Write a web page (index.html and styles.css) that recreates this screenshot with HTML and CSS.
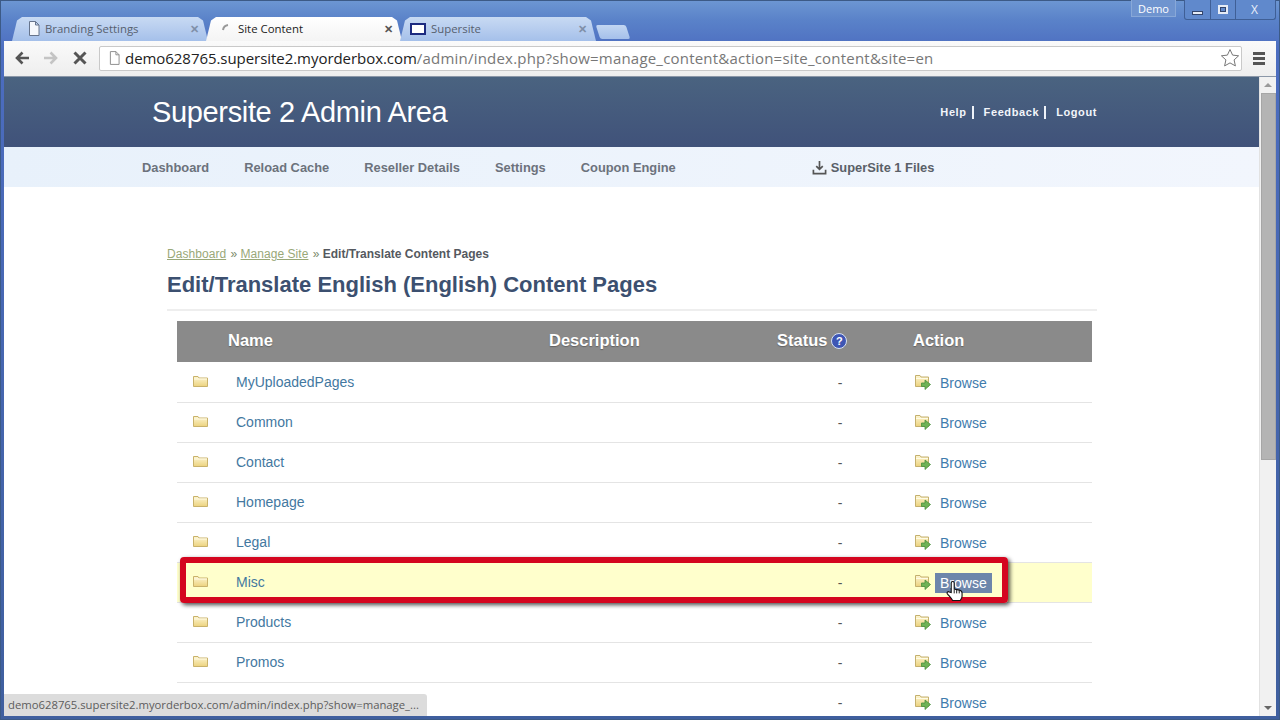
FILE: index.html
```html
<!DOCTYPE html>
<html lang="en">
<head>
    <meta charset="UTF-8">
    <title>Site Content</title>
    <link rel="stylesheet" href="styles.css">
</head>
<body>
    <svg class="defs" width="0" height="0">
        <defs>
            <linearGradient id="folderFill" x1="0" y1="0" x2="0" y2="1">
                <stop offset="0" stop-color="#fdf6d2"/>
                <stop offset="1" stop-color="#ecd27e"/>
            </linearGradient>
            <symbol id="folder" viewBox="0 0 15 12">
                <path d="M.5 11.500V1.500h4.500l1 1.500h8.500v8.500z" fill="url(#folderFill)" stroke="#c9b26a"/>
                <path d="M1 4h13" stroke="#fffbe6"/>
            </symbol>
            <symbol id="browse" viewBox="0 0 17 15">
                <path d="M.5 11.500V.5h4.500l1 1.500h7.500v9.500z" fill="url(#folderFill)" stroke="#c4b06e"/>
                <path d="M1 3.500h12" stroke="#fffbe6"/>
                <path d="M6.500 8h3.500V5l5.500 4.500-5.500 5v-3H6.500z" fill="#6fb356" stroke="#4a8f3c" stroke-width=".8"/>
            </symbol>
        </defs>
    </svg>

    <div class="window">
        <div class="tabstrip">
            <div class="tab">
                <svg class="tab-icon" viewBox="0 0 12 15"><path d="M1.500.5h6l3.500 3.500v10.500h-9.500zM7.500.5v3.500h3.500" fill="#f4f7fc" stroke="#66748c"/></svg>
                <span class="tab-title">Branding Settings</span>
                <span class="tab-close">✕</span>
            </div>
            <div class="tab tab-active">
                <svg class="tab-icon" viewBox="0 0 14 14"><path d="M2 8a6 6 0 0 1 5-5" fill="none" stroke="#999" stroke-width="2"/></svg>
                <span class="tab-title">Site Content</span>
                <span class="tab-close">✕</span>
            </div>
            <div class="tab">
                <svg class="tab-icon tab-icon-wide" viewBox="0 0 16 12"><rect x="1" y="1" width="14" height="10" fill="#fff" stroke="#1c2a80" stroke-width="2"/></svg>
                <span class="tab-title">Supersite</span>
                <span class="tab-close">✕</span>
            </div>
            <div class="tab-new"></div>
            <div class="user-badge">Demo</div>
            <div class="caption">
                <span class="caption-btn"><i class="cap-min"></i></span>
                <span class="caption-btn"><i class="cap-max"></i></span>
                <span class="caption-btn cap-close">X</span>
            </div>
        </div>

        <div class="toolbar">
            <svg class="tool" viewBox="0 0 16 16"><path d="M15 8H4M8.500 2.500L3 8l5.500 5.500" fill="none" stroke="#555" stroke-width="2.600"/></svg>
            <svg class="tool" viewBox="0 0 16 16"><path d="M1 8h11M7.500 2.500L13 8l-5.500 5.500" fill="none" stroke="#c4c4c4" stroke-width="2.600"/></svg>
            <svg class="tool" viewBox="0 0 16 16"><path d="M2.500 2.500l11 11M13.500 2.500l-11 11" fill="none" stroke="#555" stroke-width="3"/></svg>
            <div class="omnibox">
                <svg class="omni-page" viewBox="0 0 12 15"><path d="M1.500.5h6l3.500 3.500v10.500h-9.500zM7.500.5v3.500h3.500" fill="#fff" stroke="#888"/></svg>
                <span class="url"><span class="url-host">demo628765.supersite2.myorderbox.com</span>/admin/index.php?show=manage_content&amp;action=site_content&amp;site=en</span>
                <svg class="omni-star" viewBox="0 0 20 20"><path d="M10 1.500l2.600 5.600 6 .7-4.500 4.100 1.300 6L10 14.900l-5.400 3 1.300-6L1.400 7.800l6-.7z" fill="#fff" stroke="#777"/></svg>
            </div>
            <div class="menu-btn"><i></i><i></i><i></i></div>
        </div>

        <div class="viewport">
            <div class="page">
                <header class="site-header">
                    <div class="site-title">Supersite 2 Admin Area</div>
                    <div class="header-links">
                        <a class="header-link">Help</a>
                        <a class="header-link">Feedback</a>
                        <a class="header-link">Logout</a>
                    </div>
                </header>
                <nav class="site-nav">
                    <a>Dashboard</a>
                    <a>Reload Cache</a>
                    <a>Reseller Details</a>
                    <a>Settings</a>
                    <a>Coupon Engine</a>
                    <a class="nav-files">
                        <svg viewBox="0 0 16 16"><path d="M8 1v9M4.500 6.500L8 10l3.500-3.500M1.500 10.500v4h13v-4" fill="none" stroke="#555" stroke-width="1.800"/></svg>
                        SuperSite 1 Files
                    </a>
                </nav>

                <main class="content">
                    <div class="breadcrumb"><a>Dashboard</a> » <a>Manage Site</a> » <b>Edit/Translate Content Pages</b></div>
                    <h1 class="page-title">Edit/Translate English (English) Content Pages</h1>

                    <div class="pages-table">
                        <div class="table-row table-head">
                            <span></span>
                            <span>Name</span>
                            <span>Description</span>
                            <span class="status-head">Status <i class="help-dot">?</i></span>
                            <span>Action</span>
                        </div>
                        <div class="table-row">
                            <svg class="folder"><use href="#folder"/></svg>
                            <a class="name">MyUploadedPages</a><span></span><span class="status">-</span>
                            <a class="action"><svg class="browse-icon"><use href="#browse"/></svg><span class="browse">Browse</span></a>
                        </div>
                        <div class="table-row">
                            <svg class="folder"><use href="#folder"/></svg>
                            <a class="name">Common</a><span></span><span class="status">-</span>
                            <a class="action"><svg class="browse-icon"><use href="#browse"/></svg><span class="browse">Browse</span></a>
                        </div>
                        <div class="table-row">
                            <svg class="folder"><use href="#folder"/></svg>
                            <a class="name">Contact</a><span></span><span class="status">-</span>
                            <a class="action"><svg class="browse-icon"><use href="#browse"/></svg><span class="browse">Browse</span></a>
                        </div>
                        <div class="table-row">
                            <svg class="folder"><use href="#folder"/></svg>
                            <a class="name">Homepage</a><span></span><span class="status">-</span>
                            <a class="action"><svg class="browse-icon"><use href="#browse"/></svg><span class="browse">Browse</span></a>
                        </div>
                        <div class="table-row">
                            <svg class="folder"><use href="#folder"/></svg>
                            <a class="name">Legal</a><span></span><span class="status">-</span>
                            <a class="action"><svg class="browse-icon"><use href="#browse"/></svg><span class="browse">Browse</span></a>
                        </div>
                        <div class="table-row row-hover">
                            <svg class="folder"><use href="#folder"/></svg>
                            <a class="name">Misc</a><span></span><span class="status">-</span>
                            <a class="action"><svg class="browse-icon"><use href="#browse"/></svg><span class="browse browse-hover">Browse</span></a>
                            <div class="callout"></div>
                            <svg class="hand" viewBox="0 0 18 24"><path d="M5.500 13V3a1.600 1.600 0 0 1 3.200 0v6.500l5.300 1c2 .4 3 1.300 3 3v3.500c0 2-1 3-2 4.500H7c-1-2-3-4-5.500-7-1-1.300.5-3 2-2z" fill="#fff" stroke="#111" stroke-width="1.200"/><path d="M8.700 14v-4M11.300 14v-3.500M14 14v-3" stroke="#111"/></svg>
                        </div>
                        <div class="table-row">
                            <svg class="folder"><use href="#folder"/></svg>
                            <a class="name">Products</a><span></span><span class="status">-</span>
                            <a class="action"><svg class="browse-icon"><use href="#browse"/></svg><span class="browse">Browse</span></a>
                        </div>
                        <div class="table-row">
                            <svg class="folder"><use href="#folder"/></svg>
                            <a class="name">Promos</a><span></span><span class="status">-</span>
                            <a class="action"><svg class="browse-icon"><use href="#browse"/></svg><span class="browse">Browse</span></a>
                        </div>
                        <div class="table-row">
                            <svg class="folder"><use href="#folder"/></svg>
                            <a class="name"></a><span></span><span class="status">-</span>
                            <a class="action"><svg class="browse-icon"><use href="#browse"/></svg><span class="browse">Browse</span></a>
                        </div>
                    </div>
                </main>
            </div>

            <div class="scrollbar">
                <span class="scroll-up"></span>
                <div class="scroll-thumb"></div>
                <span class="scroll-down"></span>
            </div>

            <div class="status-bubble">demo628765.supersite2.myorderbox.com/admin/index.php?show=manage_...</div>
        </div>
    </div>
</body>
</html>
```

FILE: styles.css
```css
* {
    margin: 0;
    padding: 0;
    box-sizing: border-box;
}
html, body {
    width: 1280px;
    height: 720px;
    overflow: hidden;
}
body {
    font-family: 'Liberation Sans', Arial, sans-serif;
    background: #fff;
}
.defs {
    position: absolute;
}
a {
    text-decoration: none;
}

/* browser window */
.window {
    width: 1280px;
    height: 720px;
    display: flex;
    flex-direction: column;
    padding: 0 4px 4px;
    background: linear-gradient(180deg, #6d97d3 0, #5a82c9 20px, #4c6dc0 50px, #3f5f9e 100%);
    box-shadow: inset 0 0 0 1px #3c5a86;
}
.tabstrip {
    height: 41px;
    display: flex;
    align-items: flex-end;
    padding-left: 8px;
}
.tab {
    width: 196px;
    height: 24px;
    margin-right: -2px;
    display: flex;
    align-items: center;
    padding: 0 9px 1px 16px;
    background: linear-gradient(180deg, #c8daf3, #a5c0ea);
    clip-path: polygon(0 100%, 5px 15%, 10px 0, 186px 0, 191px 15%, 196px 100%);
    font-family: 'Open Sans', sans-serif;
    font-size: 11.400px;
    color: #56606e;
}
.tab-active {
    background: linear-gradient(180deg, #fff, #f4f4f4);
    color: #222;
}
.tab-icon {
    width: 12px;
    height: 15px;
    margin-right: 5px;
    flex: none;
}
.tab-icon-wide {
    width: 16px;
    height: 12px;
    margin-left: -6px;
    margin-right: 5px;
}
.tab-active .tab-icon {
    margin-right: 3px;
    margin-left: -1px;
    width: 14px;
    height: 14px;
}
.tab-title {
    flex: 1;
    white-space: nowrap;
}
.tab-close {
    font-size: 11px;
    font-weight: 700;
    color: #7f8fa8;
}
.tab-active .tab-close {
    color: #555;
}
.tab-new {
    width: 30px;
    height: 14px;
    margin-left: 4px;
    margin-bottom: 2px;
    background: linear-gradient(180deg, #c2d6f2, #a5c0ea);
    transform: skewX(18deg);
    border-radius: 2px;
}
.user-badge {
    align-self: flex-start;
    margin-left: auto;
    width: 45px;
    height: 17px;
    text-align: center;
    font-family: 'Open Sans', sans-serif;
    font-size: 11px;
    line-height: 17px;
    color: #fff;
    background: #6f94cf;
    border: 1px solid #88a8d8;
    border-top: none;
}
.caption {
    align-self: flex-start;
    margin-left: 8px;
    width: 92px;
    height: 20px;
    display: grid;
    grid-template-columns: 26px 25px 41px;
    background: #6089cc;
    border: 1px solid #3f5f96;
    border-top: none;
    border-radius: 0 0 3px 3px;
}
.caption-btn {
    display: flex;
    align-items: center;
    justify-content: center;
    border-right: 1px solid #3f5f96;
    color: #fff;
}
.cap-close {
    border-right: none;
    padding-right: 4px;
    font-family: 'Open Sans', sans-serif;
    font-size: 12px;
    color: #e8eefa;
}
.cap-min {
    width: 11px;
    height: 4px;
    margin-top: 6px;
    background: #e6ecf6;
    border: 1px solid #33456b;
}
.cap-max {
    width: 10px;
    height: 9px;
    border: 2px solid #e6ecf6;
    outline: 1px solid #33456b;
    outline-offset: -3px;
}

/* address bar */
.toolbar {
    height: 36px;
    display: flex;
    align-items: center;
    padding: 0 0 1px 10px;
    background: linear-gradient(180deg, #fafafa, #eeeeee);
    border-bottom: 1px solid #8b97a8;
}
.tool {
    width: 16px;
    height: 16px;
    margin-right: 13px;
    flex: none;
}
.omnibox {
    width: 1143px;
    height: 25px;
    margin-left: -2px;
    display: flex;
    align-items: center;
    padding: 0 1px 0 9px;
    background: #fff;
    border: 1px solid #c9c9c9;
    border-radius: 2px;
}
.omni-page {
    width: 11px;
    height: 14px;
    margin-right: 5px;
    flex: none;
}
.url {
    flex: 1;
    font-family: 'Open Sans', sans-serif;
    font-size: 15px;
    letter-spacing: 0.21px;
    color: #777;
    white-space: nowrap;
}
.url-host {
    letter-spacing: -0.05px;
    color: #222;
}
.omni-star {
    width: 20px;
    height: 20px;
    flex: none;
}
.menu-btn {
    width: 33px;
    display: flex;
    flex-direction: column;
    align-items: center;
    gap: 2px;
}
.menu-btn i {
    width: 12px;
    height: 3px;
    background: #555;
}

/* page area */
.viewport {
    flex: 1;
    min-height: 0;
    display: flex;
    position: relative;
}
.page {
    flex: 1;
    min-width: 0;
    overflow: hidden;
    background: #fff;
}
.site-header {
    height: 70px;
    display: flex;
    align-items: center;
    padding: 0 157px 0 148px;
    background: linear-gradient(180deg, #4a6380, #40527a);
}
.site-title {
    flex: 1;
    font-size: 29px;
    letter-spacing: -0.35px;
    color: #fff;
}
.header-links {
    display: flex;
    font-size: 11px;
    font-weight: 700;
    letter-spacing: 0.6px;
    color: #f2f5fa;
}
.header-link {
    line-height: 13px;
    padding: 0 5px 0 10px;
    border-right: 2px solid #eef2f8;
}
.header-link:last-child {
    border-right: none;
}
.site-nav {
    height: 40px;
    display: flex;
    align-items: center;
    padding-left: 138px;
    background: linear-gradient(90deg, #e8f1fb, #f2f6fd);
    font-size: 12.870px;
    font-weight: 700;
    color: #6c727c;
}
.site-nav a {
    margin-right: 35px;
    white-space: nowrap;
}
.site-nav .nav-files {
    margin-left: 101px;
    display: flex;
    align-items: center;
    gap: 4px;
    color: #5a6068;
}
.nav-files svg {
    width: 15px;
    height: 15px;
}
.content {
    padding: 60px 0 0 163px;
    width: 1093px;
}
.breadcrumb {
    font-size: 12px;
    line-height: 14px;
    color: #7c8a6a;
}
.breadcrumb a {
    margin-right: 1px;
    letter-spacing: 0.05px;
    color: #99a878;
    text-decoration: underline;
}
.breadcrumb b {
    color: #55595f;
}
.page-title {
    margin-top: 11px;
    padding-bottom: 11px;
    font-size: 22px;
    line-height: 26px;
    color: #3c5070;
    border-bottom: 2px solid #eeeeee;
}
.pages-table {
    margin: 10px 5px 0 10px;
}
.table-row {
    position: relative;
    height: 40px;
    padding-bottom: 2px;
    display: grid;
    grid-template-columns: 43px 329px 228px 136px 1fr;
    align-items: center;
    border-bottom: 1px solid #e4e4e4;
    font-size: 14px;
}
.table-head {
    height: 41px;
    margin-bottom: 1px;
    background: #8a8a8a;
    border-bottom: none;
    color: #fff;
    font-size: 16.500px;
    font-weight: 700;
    text-shadow: 0 1px 1px rgba(60, 60, 60, 0.5);
}
.table-head span:nth-child(2) {
    margin-left: 8px;
}
.status-head {
    display: flex;
    align-items: center;
    gap: 4px;
}
.help-dot {
    width: 16px;
    height: 16px;
    border-radius: 50%;
    background: #3e56b4;
    border: 1px solid #d8e2f4;
    font-size: 11px;
    font-style: normal;
    line-height: 14px;
    text-align: center;
    text-shadow: none;
}
.table-row .folder {
    width: 15px;
    height: 12px;
    margin-left: 16px;
    margin-top: -2px;
}
.name {
    margin-left: 16px;
    color: #43789f;
}
.status {
    text-align: center;
    padding-right: 10px;
    color: #555;
    margin-top: 2px;
}
.action {
    display: flex;
    align-items: center;
    margin-top: 2px;
    margin-left: 2px;
    color: #3f7cad;
}
.browse-icon {
    width: 17px;
    height: 15px;
}
.browse {
    margin-left: 3px;
    padding: 1px 5px;
    line-height: 18px;
}
.browse-hover {
    background: #6d86ab;
    color: #fff;
}
.row-hover {
    background: #ffffcc;
}

/* things that lie over the table */
.callout {
    position: absolute;
    left: 3px;
    top: -6px;
    width: 828px;
    height: 46px;
    border: 6px solid #d4051f;
    border-radius: 4px;
    box-shadow: 2px 2px 4px rgba(0, 0, 0, 0.7);
    pointer-events: none;
}
.hand {
    position: absolute;
    left: 769px;
    top: 17px;
    width: 17px;
    height: 23px;
}
.status-bubble {
    position: absolute;
    left: 0;
    bottom: 0;
    width: 423px;
    height: 22px;
    padding-left: 4px;
    background: #dcdcdc;
    border-radius: 0 3px 0 0;
    font-family: 'Open Sans', sans-serif;
    font-size: 11.300px;
    line-height: 22px;
    color: #5c5c5c;
    white-space: nowrap;
}

/* scrollbar */
.scrollbar {
    width: 17px;
    display: flex;
    flex-direction: column;
    align-items: center;
    background: #f1f1f1;
    border-left: 1px solid #e2e2e2;
}
.scroll-up, .scroll-down {
    width: 0;
    height: 0;
    border-left: 4px solid transparent;
    border-right: 4px solid transparent;
}
.scroll-up {
    margin: 6px 0 6px;
    border-bottom: 4px solid #9a9a9a;
}
.scroll-thumb {
    width: 15px;
    height: 367px;
    background: #b4b4b4;
    border: 1px solid #a6a6a6;
}
.scroll-down {
    margin-top: auto;
    margin-bottom: 6px;
    border-top: 4px solid #666;
}
```
